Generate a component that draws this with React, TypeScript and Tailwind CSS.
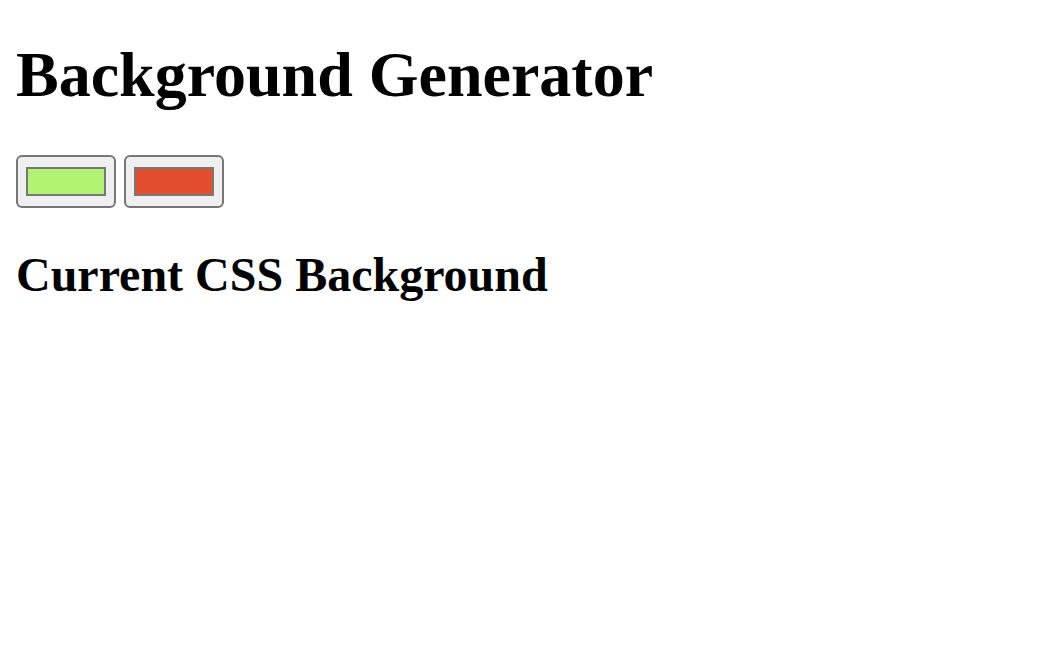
import { useState } from 'react';

function ColorSwatch({ color }: { color: string }) {
  return (
    <button
      type="button"
      className="w-[100px] h-[53px] border-2 border-[#767676] rounded-[6px] bg-[#efefef] px-[8px] py-[10px] flex"
    >
      <span className="block w-full h-full border-2 border-[#777777]" style={{ backgroundColor: color }} />
    </button>
  );
}

export default function App() {
  const [colors] = useState(['#b2f373', '#e14d2d']);

  return (
    <div className="min-h-screen bg-white text-black px-4 font-['Liberation_Serif','Times_New_Roman',serif]">
      <h1 className="pt-[38px] text-[64px] leading-[74px] font-bold">Background Generator</h1>

      <div className="mt-[43px] flex gap-2">
        {colors.map(c => (
          <ColorSwatch key={c} color={c} />
        ))}
      </div>

      <h2 className="mt-[39px] text-[48px] leading-[55px] font-bold">Current CSS Background</h2>
    </div>
  );
}
